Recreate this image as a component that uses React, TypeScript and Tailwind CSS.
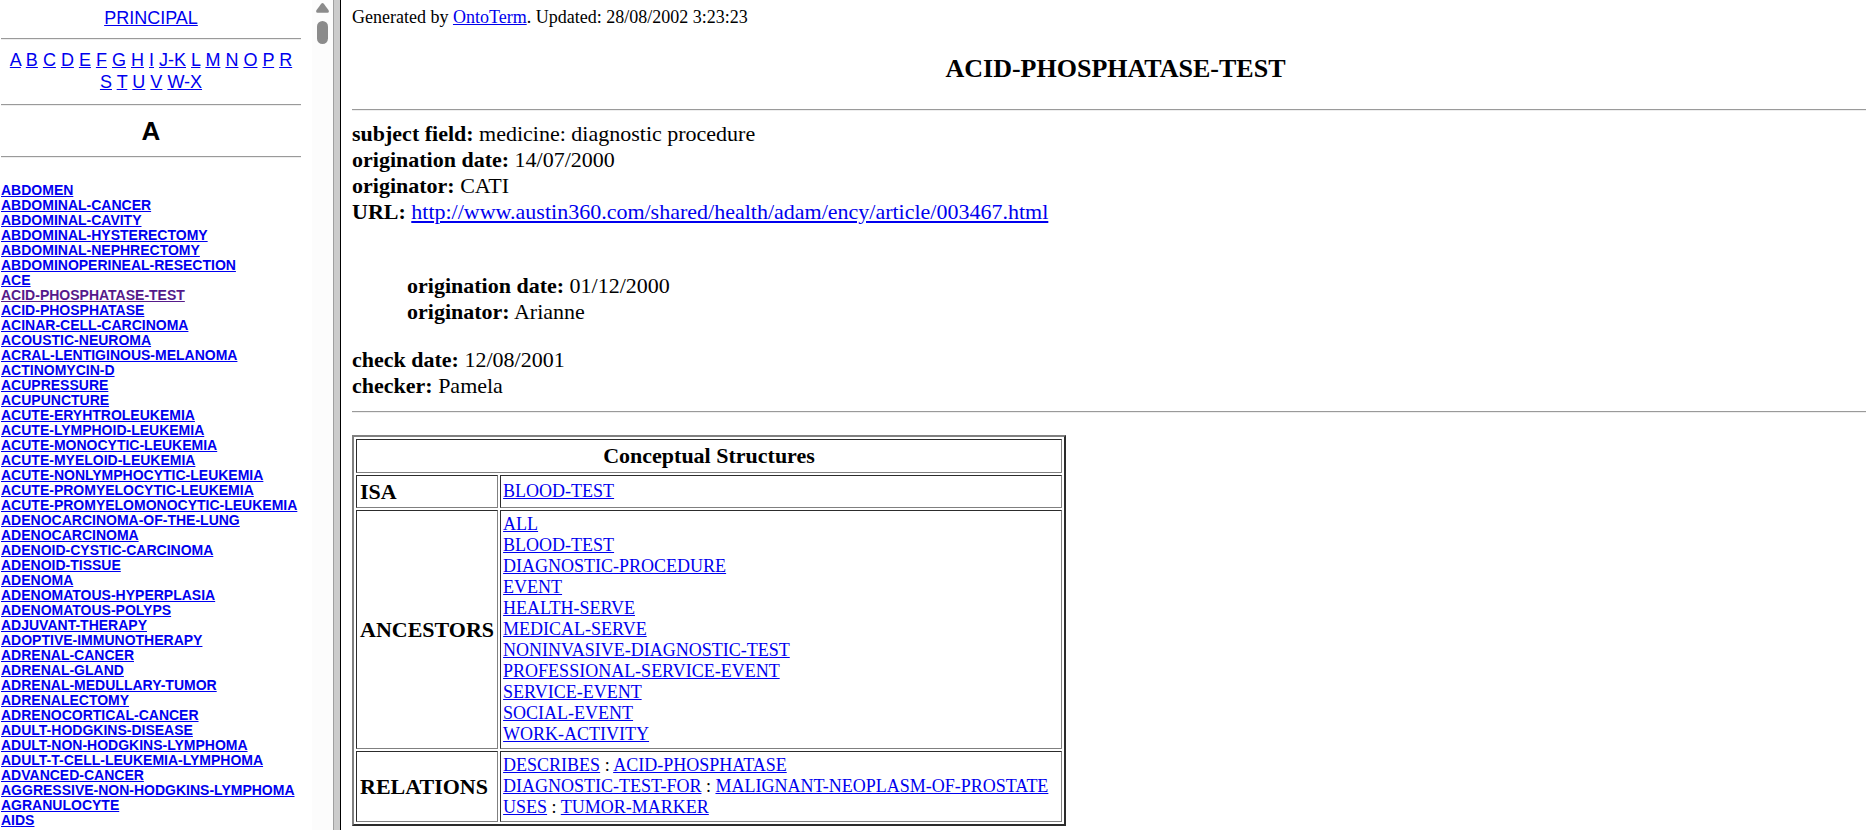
import type { ReactNode } from "react";

const letters = ["A", "B", "C", "D", "E", "F", "G", "H", "I", "J-K", "L", "M", "N", "O", "P", "R", "S", "T", "U", "V", "W-X"];

const currentTerm = "ACID-PHOSPHATASE-TEST";

const terms = [
  "ABDOMEN", "ABDOMINAL-CANCER", "ABDOMINAL-CAVITY", "ABDOMINAL-HYSTERECTOMY", "ABDOMINAL-NEPHRECTOMY",
  "ABDOMINOPERINEAL-RESECTION", "ACE", "ACID-PHOSPHATASE-TEST", "ACID-PHOSPHATASE", "ACINAR-CELL-CARCINOMA",
  "ACOUSTIC-NEUROMA", "ACRAL-LENTIGINOUS-MELANOMA", "ACTINOMYCIN-D", "ACUPRESSURE", "ACUPUNCTURE",
  "ACUTE-ERYHTROLEUKEMIA", "ACUTE-LYMPHOID-LEUKEMIA", "ACUTE-MONOCYTIC-LEUKEMIA", "ACUTE-MYELOID-LEUKEMIA",
  "ACUTE-NONLYMPHOCYTIC-LEUKEMIA", "ACUTE-PROMYELOCYTIC-LEUKEMIA", "ACUTE-PROMYELOMONOCYTIC-LEUKEMIA",
  "ADENOCARCINOMA-OF-THE-LUNG", "ADENOCARCINOMA", "ADENOID-CYSTIC-CARCINOMA", "ADENOID-TISSUE", "ADENOMA",
  "ADENOMATOUS-HYPERPLASIA", "ADENOMATOUS-POLYPS", "ADJUVANT-THERAPY", "ADOPTIVE-IMMUNOTHERAPY",
  "ADRENAL-CANCER", "ADRENAL-GLAND", "ADRENAL-MEDULLARY-TUMOR", "ADRENALECTOMY", "ADRENOCORTICAL-CANCER",
  "ADULT-HODGKINS-DISEASE", "ADULT-NON-HODGKINS-LYMPHOMA", "ADULT-T-CELL-LEUKEMIA-LYMPHOMA",
  "ADVANCED-CANCER", "AGGRESSIVE-NON-HODGKINS-LYMPHOMA", "AGRANULOCYTE", "AIDS",
];

const ancestors = [
  "ALL", "BLOOD-TEST", "DIAGNOSTIC-PROCEDURE", "EVENT", "HEALTH-SERVE", "MEDICAL-SERVE",
  "NONINVASIVE-DIAGNOSTIC-TEST", "PROFESSIONAL-SERVICE-EVENT", "SERVICE-EVENT", "SOCIAL-EVENT", "WORK-ACTIVITY",
];

const relations = [
  ["DESCRIBES", "ACID-PHOSPHATASE"],
  ["DIAGNOSTIC-TEST-FOR", "MALIGNANT-NEOPLASM-OF-PROSTATE"],
  ["USES", "TUMOR-MARKER"],
];

function Link({ children, href = "#", visited = false }: { children: ReactNode; href?: string; visited?: boolean }) {
  return (
    <a href={href} className={visited ? "text-[#551a8b] underline" : "text-[#0000ee] underline"}>
      {children}
    </a>
  );
}

function Rule() {
  return <hr className="h-0.5 border-t border-b border-t-[#9a9a9a] border-b-[#eeeeee]" />;
}

function Field({ label, children }: { label: string; children: ReactNode }) {
  return (
    <p>
      <b>{label}:</b> {children}
    </p>
  );
}

const cell = "border border-t-[#2c2c2c] border-l-[#2c2c2c] border-r-[#808080] border-b-[#808080]";

function Row({ label, children }: { label: string; children: ReactNode }) {
  return (
    <tr>
      <th scope="row" className={`${cell} w-[142px] px-[3px] py-0.5 text-left text-[22px] leading-[27px]`}>{label}</th>
      <td className={`${cell} px-0.5 py-[3px] text-lg leading-[21px]`}>{children}</td>
    </tr>
  );
}

function Sidebar() {
  return (
    <nav className="flex w-[333px] shrink-0 overflow-hidden font-['Liberation_Sans',Arial,sans-serif]">
      <div className="min-w-0 flex-1 pl-px pr-[11px]">
        <p className="pt-[7px] text-center text-lg leading-[22px]">
          <Link>PRINCIPAL</Link>
        </p>
        <div className="pt-[9px]"><Rule /></div>
        <p className="px-1 pt-[9px] pb-[11px] text-center text-lg leading-[22px]">
          {letters.map((letter) => (
            <span key={letter}>
              <span className="whitespace-nowrap"><Link>{letter}</Link></span>{" "}
            </span>
          ))}
        </p>
        <Rule />
        <h2 className="py-[10px] text-center text-[26px] font-bold leading-[30px]">A</h2>
        <Rule />
        <ul className="pt-[25px] text-[14px] font-bold leading-[15px] whitespace-nowrap">
          {terms.map((term) => (
            <li key={term}>
              <Link visited={term === currentTerm}>{term}</Link>
            </li>
          ))}
        </ul>
      </div>
      <div className="flex w-[21px] flex-col items-center bg-[#fcfcfc] pt-[3px]">
        <svg width="13" height="10" viewBox="0 0 13 10" fill="#8b8b8b" aria-hidden="true">
          <path d="M5.2.8Q6.500-.6 7.800.8L12.600 7.300Q13.400 9.700 11.500 9.800H1.500Q-.4 9.700.4 7.300Z" />
        </svg>
        <div className="mt-2 h-[23px] w-[11px] rounded-full bg-[#8b8b8b]" />
      </div>
    </nav>
  );
}

function Entry() {
  return (
    <main className="-mr-[13px] min-w-0 flex-1 pl-[11px] font-['Liberation_Serif','Times_New_Roman',serif]">
      <p className="pt-[7px] text-lg leading-[21px]">
        Generated by <Link>OntoTerm</Link>. Updated: 28/08/2002 3:23:23
      </p>
      <h1 className="pt-[26px] pb-[25px] text-center text-[26px] font-bold leading-[30px]">{currentTerm}</h1>
      <Rule />
      <div className="pt-[10px] pb-3 text-[22px] leading-[26px]">
        <Field label="subject field">medicine: diagnostic procedure</Field>
        <Field label="origination date">14/07/2000</Field>
        <Field label="originator">CATI</Field>
        <Field label="URL">
          <Link href="http://www.austin360.com/shared/health/adam/ency/article/003467.html">
            http://www.austin360.com/shared/health/adam/ency/article/003467.html
          </Link>
        </Field>
        <div className="mt-12 mb-[22px] pl-[55px]">
          <Field label="origination date">01/12/2000</Field>
          <Field label="originator">Arianne</Field>
        </div>
        <Field label="check date">12/08/2001</Field>
        <Field label="checker">Pamela</Field>
      </div>
      <Rule />
      <table className="mt-[22px] min-w-[714px] border-separate border-spacing-[2px] border-2 border-t-[#808080] border-l-[#808080] border-r-[#2c2c2c] border-b-[#2c2c2c] whitespace-nowrap">
        <thead>
          <tr>
            <th colSpan={2} className={`${cell} px-[3px] py-[3px] text-center text-[22px] leading-[26px]`}>
              Conceptual Structures
            </th>
          </tr>
        </thead>
        <tbody>
          <Row label="ISA">
            <Link>BLOOD-TEST</Link>
          </Row>
          <Row label="ANCESTORS">
            {ancestors.map((name) => (
              <div key={name}><Link>{name}</Link></div>
            ))}
          </Row>
          <Row label="RELATIONS">
            {relations.map(([relation, target]) => (
              <div key={relation}>
                <Link>{relation}</Link> : <Link>{target}</Link>
              </div>
            ))}
          </Row>
        </tbody>
      </table>
    </main>
  );
}

export default function App() {
  return (
    <div className="flex h-screen overflow-hidden bg-white text-black">
      <Sidebar />
      <div className="w-2 shrink-0 border-l border-r border-l-[#a0a0a0] border-r-black bg-[#cccccc]" />
      <Entry />
    </div>
  );
}
